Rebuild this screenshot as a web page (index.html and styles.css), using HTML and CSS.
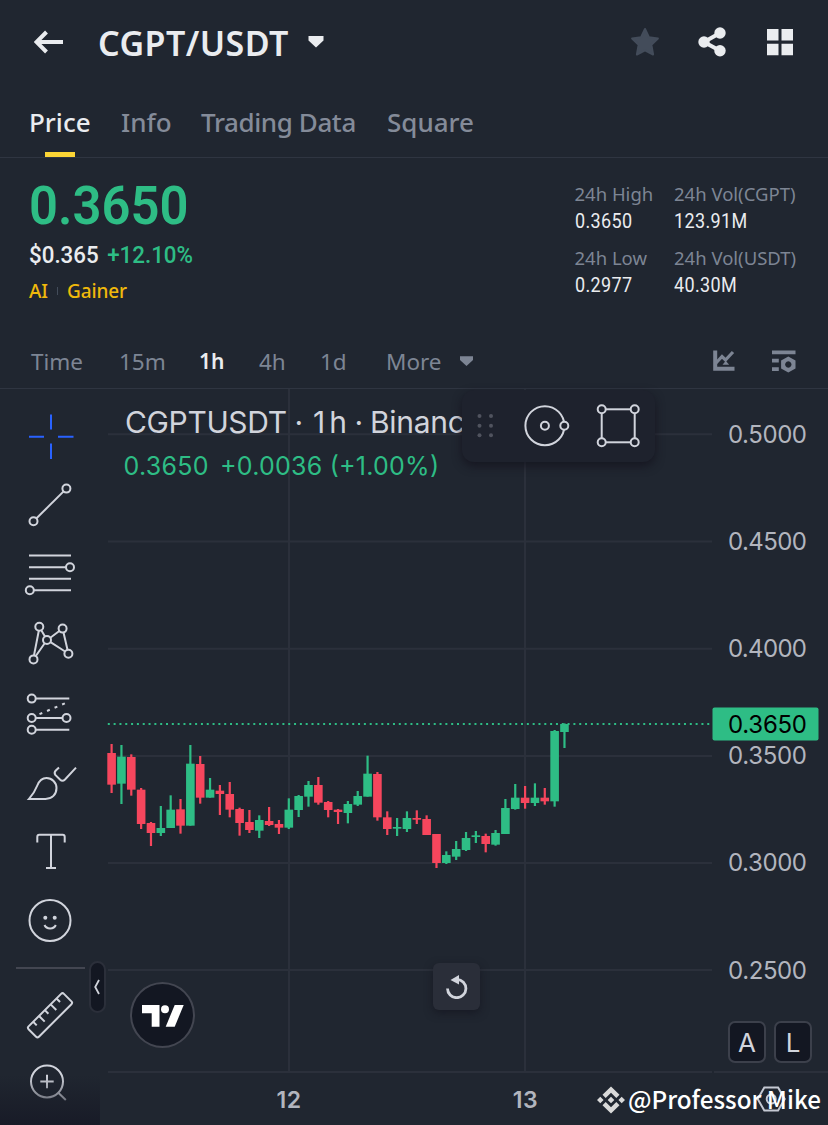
FILE: index.html
```html
<!DOCTYPE html>
<html>
<head>
<meta charset="utf-8" />
<title>CGPT/USDT</title>
<link rel="stylesheet" href="styles.css">
</head>

<body>

<header class="topbar">
  <svg class="back" width="30" height="24" viewBox="0 0 30 24"><path d="M29 12H3M12.500 2L2.500 12l10 10" fill="none" stroke="#eaecef" stroke-width="4"/></svg>
  <h1>CGPT/USDT</h1>
  <svg class="caret" width="16" height="12" viewBox="0 0 16 12"><path d="M.5 0h15v4.500L8 11.500.5 4.500z" fill="#eaecef"/></svg>
  <div class="actions">
    <svg width="30" height="30" viewBox="0 0 30 30"><path d="M15 2l3.900 8.300 9 1.200-6.500 6.300 1.700 9.700L15 23.300 6.900 27.500l1.700-9.700L2.100 11.500l9-1.200z" fill="#434c5a" stroke="#434c5a" stroke-width="2" stroke-linejoin="round"/></svg>
    <svg width="30" height="30" viewBox="0 0 30 30"><g fill="#eaecef"><circle cx="6" cy="15" r="5.700"/><circle cx="22" cy="6" r="5.700"/><circle cx="22" cy="23.800" r="5.700"/></g><path d="M22 6L6 15l16 8.800" fill="none" stroke="#eaecef" stroke-width="4"/></svg>
    <svg width="30" height="30" viewBox="0 0 30 30"><path d="M2 2h11.500v11.500H2zM16.500 2H28v11.500H16.500zM2 16.800h11.500v11.500H2zM16.500 16.800H28v11.500H16.500z" fill="#eaecef"/></svg>
  </div>
</header>

<nav class="tabs">
  <a class="active t-price">Price</a>
  <a class="t-info">Info</a>
  <a class="t-data">Trading Data</a>
  <a class="t-square">Square</a>
</nav>

<section class="ticker">
  <div class="last">
    <div class="price">0.3650</div>
    <div class="sub"><span class="usd">$0.365</span><span class="change">+12.10%</span></div>
    <div class="tags"><span>AI</span><i></i><span>Gainer</span></div>
  </div>
  <dl class="stats">
    <div><dt>24h High</dt><dd>0.3650</dd></div>
    <div><dt>24h Vol(CGPT)</dt><dd>123.91M</dd></div>
    <div><dt>24h Low</dt><dd>0.2977</dd></div>
    <div><dt>24h Vol(USDT)</dt><dd>40.30M</dd></div>
  </dl>
</section>

<nav class="intervals">
  <a>Time</a>
  <a>15m</a>
  <a class="active">1h</a>
  <a>4h</a>
  <a>1d</a>
  <a>More</a>
  <svg class="more" width="13" height="10" viewBox="0 0 12 9"><path d="M0 0h12v3.500L6 9 0 3.500z" fill="#7d8594"/></svg>
  <div class="tools">
    <svg width="22" height="22" viewBox="0 0 22 22"><path d="M2.200 0.500v18.300H21.500" fill="none" stroke="#7d8594" stroke-width="4"/><path d="M3 13l6-6.500 3.500 3.500 7.500-8" fill="none" stroke="#7d8594" stroke-width="3.200"/><path d="M9.500 14.800l3.300-4 3.300 4z" fill="#7d8594"/></svg>
    <svg width="24" height="23" viewBox="0 0 24 23"><path d="M0 .5h23.500v3.800H0zM0 8.800h6.800v3.800H0zM0 17.300h6.800V21H0z" fill="#7d8594"/><path fill-rule="evenodd" d="M16.300 6.500l7.200 4v8l-7.200 4-7.200-4v-8zM16.300 11.300a3.200 3.200 0 1 0 .01 0z" fill="#7d8594"/></svg>
  </div>
</nav>

<main class="chart">
  <aside class="drawing">
    <svg class="cross" viewBox="0 0 69 69.250"><path d="M35 12.500v15M35 41.500v15.500M13 34.800h15M42 34.800h15.500"/></svg>
    <svg viewBox="0 0 69 69.250"><path d="M20.300 47.500L47.600 20.400"/><circle cx="50.400" cy="17.600" r="4"/><circle cx="17.500" cy="50.300" r="4"/></svg>
    <svg viewBox="0 0 69 69.250"><path d="M13 15.600h42M13 27.300h37M13 38.800h42M18 50.300h37"/><circle cx="54" cy="27.300" r="4"/><circle cx="13.800" cy="50.300" r="4"/></svg>
    <svg viewBox="0 0 69 69.250"><path d="M18 46.400l4.800-24.600M25.300 21.300l3.700 6.200M28.700 34.300L19.800 47M34.300 28.700l9-6.700M47.500 23.500l4 17.300M34.500 33.200l14.600 9.300"/><circle cx="17.500" cy="50.400" r="4"/><circle cx="23.300" cy="17.800" r="4"/><circle cx="31" cy="31" r="4"/><circle cx="46.600" cy="19.600" r="4"/><circle cx="52.400" cy="44.800" r="4"/></svg>
    <svg viewBox="0 0 69 69.250"><path d="M19.700 19.600H53.300M19.700 39h27M19.700 50.700H53.300"/><path d="M23.500 35.200l27.500-11.800" stroke-dasharray="3 5.200"/><circle cx="15.700" cy="19.600" r="4"/><circle cx="15.700" cy="39" r="4"/><circle cx="50.500" cy="39" r="4"/><circle cx="15.700" cy="50.700" r="4"/></svg>
    <svg viewBox="0 0 69 69.250"><path d="M13 50.900C17.500 46 19.500 42 21.300 37.500 23.300 32.500 26 30 30.500 30c5.500 0 10 4.500 10 10 0 6.500-4.500 10.900-11 10.900zM43 19.600l-3.200 2.900q-2 2-.5 4.500l4.900 4.800q2.300 2 4.800-.3l11-11.900"/></svg>
    <svg viewBox="0 0 69 69.250"><path d="M21.300 25.500V20q0-2.300 2-2.300h23.400q2 0 2 2.300v5.500M35 17.700V51M30 51h10"/></svg>
    <svg viewBox="0 0 69 69.250"><circle cx="34" cy="34.500" r="20.500"/><circle class="dot" cx="29.300" cy="31.700" r="2"/><circle class="dot" cx="38.700" cy="31.700" r="2"/><path d="M28.500 39a6 5.200 0 0 0 11.300 0"/></svg>
    <hr>
    <svg viewBox="0 0 69 69.250"><g transform="translate(34 34.300) rotate(-45)"><rect x="-25" y="-7.300" width="50" height="14.600" rx="2"/><path d="M-16.500-7.300v5M-8.200-7.300v8M0-7.300v5M8.200-7.300v8M16.500-7.300v5"/></g></svg>
    <svg viewBox="0 0 69 69.250"><circle cx="31" cy="31.500" r="16"/><path d="M31 24.800v13.400M24.300 31.500h13.400M42.500 43l7.300 7"/></svg>
  </aside>

  <div class="plot">
    <!-- grid, candles and both axes share this one svg -->
    <svg class="canvas" width="728" height="736" viewBox="100 389 728 736">
      <path class="grid" d="M108 434.300h604M108 541.500h604M108 648.700h604M108 756h604M108 863h604M108 970h604M289 389v682M525 389v682M108 1072h604M714 1072h114"/>
      <g id="candles"></g>
      <path d="M107.800 723.900H712" stroke="#2ebd85" stroke-width="2" stroke-dasharray="2 3.820"/>
      <g class="axis">
        <text x="728" y="443" textLength="79">0.5000</text>
        <text x="728" y="550" textLength="79">0.4500</text>
        <text x="728" y="657" textLength="79">0.4000</text>
        <text x="728" y="764.300" textLength="79">0.3500</text>
        <text x="728" y="871.300" textLength="79">0.3000</text>
        <text x="728" y="978.500" textLength="79">0.2500</text>
      </g>
      <rect x="712.500" y="707.500" width="106" height="33" rx="2" fill="#2ebd85"/>
      <text class="now" x="728" y="732.600" textLength="79">0.3650</text>
      <text class="day" x="289" y="1108">12</text>
      <text class="day" x="525.500" y="1108">13</text>
      <text class="symbol" x="125" y="433" textLength="162">CGPTUSDT</text>
      <text class="symbol" x="294.500" y="433">·</text>
      <text class="symbol" x="313" y="433" textLength="34">1h</text>
      <text class="symbol" x="354.500" y="433">·</text>
      <text class="symbol" x="370" y="433" textLength="112">Binance</text>
      <text class="delta" x="123.500" y="474.500" textLength="85">0.3650</text>
      <text class="delta" x="220" y="474.500" textLength="219">+0.0036 (+1.00%)</text>
      <path d="M764.300 1087.500h13.800l6.600 11.500-6.600 11.500h-13.800l-6.600-11.500z" fill="none" stroke="#c5c9d3" stroke-width="2"/>
      <circle cx="771.200" cy="1099" r="4.500" fill="none" stroke="#c5c9d3" stroke-width="2"/>
    </svg>

    <div class="floating">
      <svg width="193" height="72" viewBox="462 390 193 72">
        <g fill="#50535e"><circle cx="479.500" cy="416" r="2"/><circle cx="491" cy="416" r="2"/><circle cx="479.500" cy="425.700" r="2"/><circle cx="491" cy="425.700" r="2"/><circle cx="479.500" cy="435.300" r="2"/><circle cx="491" cy="435.300" r="2"/></g>
        <g fill="none" stroke="#d1d4dc" stroke-width="2"><circle cx="544.900" cy="425.700" r="19.500"/><circle cx="544.900" cy="425.700" r="4"/><circle cx="564.300" cy="425.700" r="4" fill="#1e222d"/>
        <rect x="601.700" y="409.300" width="33" height="33"/></g>
        <g fill="#1e222d" stroke="#d1d4dc" stroke-width="2"><circle cx="601.700" cy="409.300" r="4"/><circle cx="634.700" cy="409.300" r="4"/><circle cx="601.700" cy="442.300" r="4"/><circle cx="634.700" cy="442.300" r="4"/></g>
      </svg>
    </div>

    <div class="tv-logo">
      <svg width="42" height="22" viewBox="0 0 42 22" fill="#fff"><path d="M0 0h17.500v21.700H9.700V8.300H0z"/><circle cx="23" cy="4.200" r="4"/><path d="M32.700 0h9l-9 21.700h-9z"/></svg>
    </div>

    <button class="reset">
      <svg width="22" height="24" viewBox="0 0 22 24"><path d="M1.500 13.500a9.200 9.200 0 1 0 9.500-9.200H9" fill="none" stroke="#d1d4dc" stroke-width="2.800"/><path d="M4.500 5L13 0v9.500z" fill="#d1d4dc"/></svg>
    </button>

    <div class="scale"><button>A</button><button>L</button></div>
  </div>

  <div class="fade"></div>
  <div class="collapse"><svg width="6" height="16" viewBox="0 0 6 16"><path d="M5 1L1.200 8 5 15" fill="none" stroke="#d1d4dc" stroke-width="1.800"/></svg></div>
  <div class="watermark">
    <svg width="28" height="28" viewBox="0 0 28 28" fill="#d9d9d9"><path d="M14 .5l8.500 8.300-3.200 3.200L14 6.800 8.700 12 5.500 8.800zM14 27.500l8.500-8.300-3.200-3.200-5.300 5.200L8.700 16l-3.200 3.200zM14 10.700l3.300 3.300-3.300 3.300-3.300-3.300zM3.300 10.700L6.600 14l-3.300 3.300L0 14zM24.700 10.700L28 14l-3.300 3.300-3.300-3.300z"/></svg>
    <span>@Professor Mike</span>
  </div>
</main>

<script src="chart.js"></script>
</body>
</html>
```
FILE: styles.css
```css
* {
  box-sizing: border-box;
}
html, body {
  margin: 0;
  padding: 0;
}
body {
  width: 828px;
  height: 1125px;
  overflow: hidden;
  background: #202630;
  color: #eaecef;
  font-family: "Noto Sans", "Open Sans", sans-serif;
}
svg {
  display: block;
  flex: none;
}

/* header */
.topbar {
  display: flex;
  align-items: center;
  height: 84px;
  padding: 0 33px 0 34px;
}
.topbar h1 {
  width: 191px;
  margin: 2px 19px 0 34px;
  font-size: 34px;
  line-height: 40px;
  font-weight: 600;
  letter-spacing: .45px;
  white-space: nowrap;
}
.actions {
  display: flex;
  gap: 37.500px;
  margin-left: auto;
}
.tabs {
  display: flex;
  gap: 30px;
  height: 74px;
  padding: 18px 29px 0;
  border-bottom: 1px solid #2f3541;
  color: #848b99;
  font-size: 26px;
  line-height: 40px;
  font-weight: 500;
  white-space: nowrap;
}
.tabs a {
  position: relative;
}
.t-price { width: 62px; }
.t-info { width: 50px; }
.t-data {
  width: 156px;
  letter-spacing: -.4px;
}
.tabs .active {
  color: #eaecef;
}
.tabs .active:after {
  content: "";
  position: absolute;
  left: 16px;
  bottom: 0;
  width: 30px;
  height: 5px;
  background: #fcd535;
}

/* price */
.ticker {
  display: flex;
  justify-content: space-between;
  height: 176px;
  padding: 16px 29px 0;
}
/* squeeze Roboto to get narrow figures */
.price, .sub, .stats dd {
  transform-origin: 0 50%;
}
.price {
  height: 64px;
  color: #2ebd85;
  font: 600 54px/64px Roboto, sans-serif;
  transform: scaleX(.94);
}
.sub {
  display: flex;
  gap: 9px;
  height: 32px;
  margin-top: 1px;
  font: 500 23.500px/32px Roboto, sans-serif;
  transform: scaleX(.95);
}
.change {
  color: #2ebd85;
}
.tags {
  display: flex;
  align-items: center;
  gap: 9px;
  margin-top: 4px;
  color: #f0b90b;
  font-size: 19px;
  line-height: 32px;
  font-weight: 500;
  letter-spacing: -.1px;
}
.tags i {
  width: 1px;
  height: 8px;
  background: #434c5a;
}
.stats {
  display: grid;
  grid-template-columns: 99.500px 125px;
  grid-auto-rows: 63.500px;
  margin: 5px 0 0;
  white-space: nowrap;
}
.stats dt {
  color: #7d8594;
  font-size: 18.500px;
  line-height: 29px;
}
.stats dd {
  margin: 0;
  font: 400 20px/26px Roboto, sans-serif;
  letter-spacing: .4px;
  transform: scaleX(.9);
}

/* intervals */
.intervals {
  display: grid;
  grid-template-columns: 88px 80px 60px 61px 66px 74px 1fr auto;
  align-items: center;
  height: 55px;
  padding: 0 32px 0 31px;
  border-bottom: 1px solid #2f3541;
  color: #7d8594;
  font-size: 22.500px;
  white-space: nowrap;
}
.intervals .active {
  color: #eaecef;
  font-weight: 600;
  font-size: 21px;
}
.tools {
  display: flex;
  gap: 37px;
}

/* chart */
.chart {
  position: relative;
  display: flex;
  height: 736px;
  font-family: Inter, "Liberation Sans", sans-serif;
}
.drawing {
  width: 100px;
  padding: 12.500px 0 0 16px;
}
.drawing svg {
  width: 69px;
  height: 69.250px;
  fill: none;
  stroke: #d1d4dc;
  stroke-width: 2;
}
.drawing .cross {
  stroke: #2962ff;
}
.drawing .dot {
  fill: #d1d4dc;
  stroke: none;
}
.drawing hr {
  width: 69px;
  height: 2px;
  margin: 11.500px 0 12px;
  border: 0;
  background: #434651;
}
.plot {
  position: relative;
  width: 728px;
}
.grid {
  fill: none;
  stroke: #2b303b;
  stroke-width: 2;
}
.up { fill: #2ebd85; }
.down { fill: #f6465d; }
.axis, .now {
  fill: #b2b5be;
  font-size: 24px;
}
.now {
  fill: #000;
}
.day {
  fill: #b2b5be;
  font-size: 23px;
  font-weight: 600;
  letter-spacing: .5px;
  text-anchor: middle;
}
.symbol {
  fill: #d1d4dc;
  font-size: 30px;
}
.delta {
  fill: #2ebd85;
  font-size: 25px;
}
.floating {
  position: absolute;
  left: 362px;
  top: 1px;
  width: 193px;
  height: 72px;
  border-radius: 12px;
  background: #1e222d;
  box-shadow: 0 4px 10px rgba(19, 18, 28, .75);
}
.tv-logo {
  position: absolute;
  left: 30px;
  top: 593px;
  display: flex;
  align-items: center;
  justify-content: center;
  width: 65px;
  height: 66px;
  padding-top: 2px;
  border: 2px solid #434651;
  border-radius: 50%;
  background: #131722;
}
button {
  padding: 0;
  font-family: inherit;
}
.reset {
  position: absolute;
  left: 333px;
  top: 574px;
  display: flex;
  align-items: center;
  justify-content: center;
  width: 47px;
  height: 47px;
  border: 0;
  border-radius: 6px;
  background: #2a2e39;
  box-shadow: 0 3px 9px rgba(19, 18, 28, .6);
}
.scale {
  position: absolute;
  left: 628px;
  top: 632px;
  display: flex;
  gap: 8px;
}
.scale button {
  width: 38px;
  height: 42px;
  border: 2px solid #3c404b;
  border-radius: 7px;
  background: #131722;
  color: #d1d4dc;
  font-size: 26px;
}
.fade {
  position: absolute;
  left: 0;
  bottom: 0;
  width: 100px;
  height: 50px;
  background: linear-gradient(rgba(24, 26, 38, 0), #181b27);
}
.collapse {
  position: absolute;
  left: 89px;
  top: 572px;
  display: flex;
  align-items: center;
  justify-content: center;
  width: 17px;
  height: 52px;
  padding-right: 1px;
  border: 2px solid #2b2f3a;
  border-radius: 9px;
  background: #131722;
}
.watermark {
  position: absolute;
  left: 597px;
  top: 694px;
  display: flex;
  align-items: center;
  gap: 3px;
  color: #fff;
  font: 500 24.200px/36px "Noto Sans CJK SC", sans-serif;
  white-space: nowrap;
}
.watermark span {
  margin-top: -2px;
}
```
FILE: chart.js
```javascript
var NS = 'http://www.w3.org/2000/svg';
var SCALE = 3;
var TOP = 700;
var FIRST = 111.6;
var STEP = 9.845;

// [up, high, body top, body bottom, low] in 3x pixels below TOP
var candles = [
	[0,132,159,254,279],[1,135,170,251,312],[0,163,171,269,287],[0,264,269,372,387],
	[0,366,369,399,438],[1,318,384,399,408],[1,286,329,384,384],[0,297,328,377,401],
	[1,135,191,377,377],[0,168,192,293,311],[1,234,269,293,293],[0,255,272,282,345],
	[0,246,282,329,352],[0,323,327,369,407],[0,330,366,390,399],[1,346,360,392,414],
	[0,321,363,375,378],[0,360,372,383,402],[1,295,329,383,387],[1,285,288,330,351],
	[1,243,255,290,320],[0,231,255,308,314],[0,303,306,330,352],[0,327,329,336,372],
	[1,303,312,339,370],[1,273,288,314,318],[1,167,221,290,290],[0,216,222,352,362],
	[0,334,352,387,405],[1,354,381,386,408],[1,334,354,387,396],[0,331,354,359,372],
	[0,346,357,405,405],[0,402,402,489,504],[1,454,465,489,492],[1,423,447,470,480],
	[1,396,414,450,453],[1,393,406,411,429],[0,401,408,432,457],[1,390,399,434,437],
	[1,297,324,402,402],[1,252,293,327,329],[0,258,293,309,326],[1,250,293,309,318],
	[0,264,293,304,314],[1,90,93,304,320],[1,70,72,96,144]
];

function bar(parent, cls, x, w, y1, y2) {
	var r = document.createElementNS(NS, 'rect');
	r.setAttribute('class', cls);
	r.setAttribute('x', x - w / 2);
	r.setAttribute('y', TOP + y1 / SCALE);
	r.setAttribute('width', w);
	r.setAttribute('height', (y2 - y1) / SCALE);
	parent.appendChild(r);
}

var g = document.getElementById('candles');
for (var i = 0; i < candles.length; i++) {
	var c = candles[i];
	var x = FIRST + i * STEP;
	var cls = c[0] ? 'up' : 'down';
	bar(g, cls, x, 2.2, c[1], c[4]);
	bar(g, cls, x, 8.6, c[2], c[3]);
}
```
